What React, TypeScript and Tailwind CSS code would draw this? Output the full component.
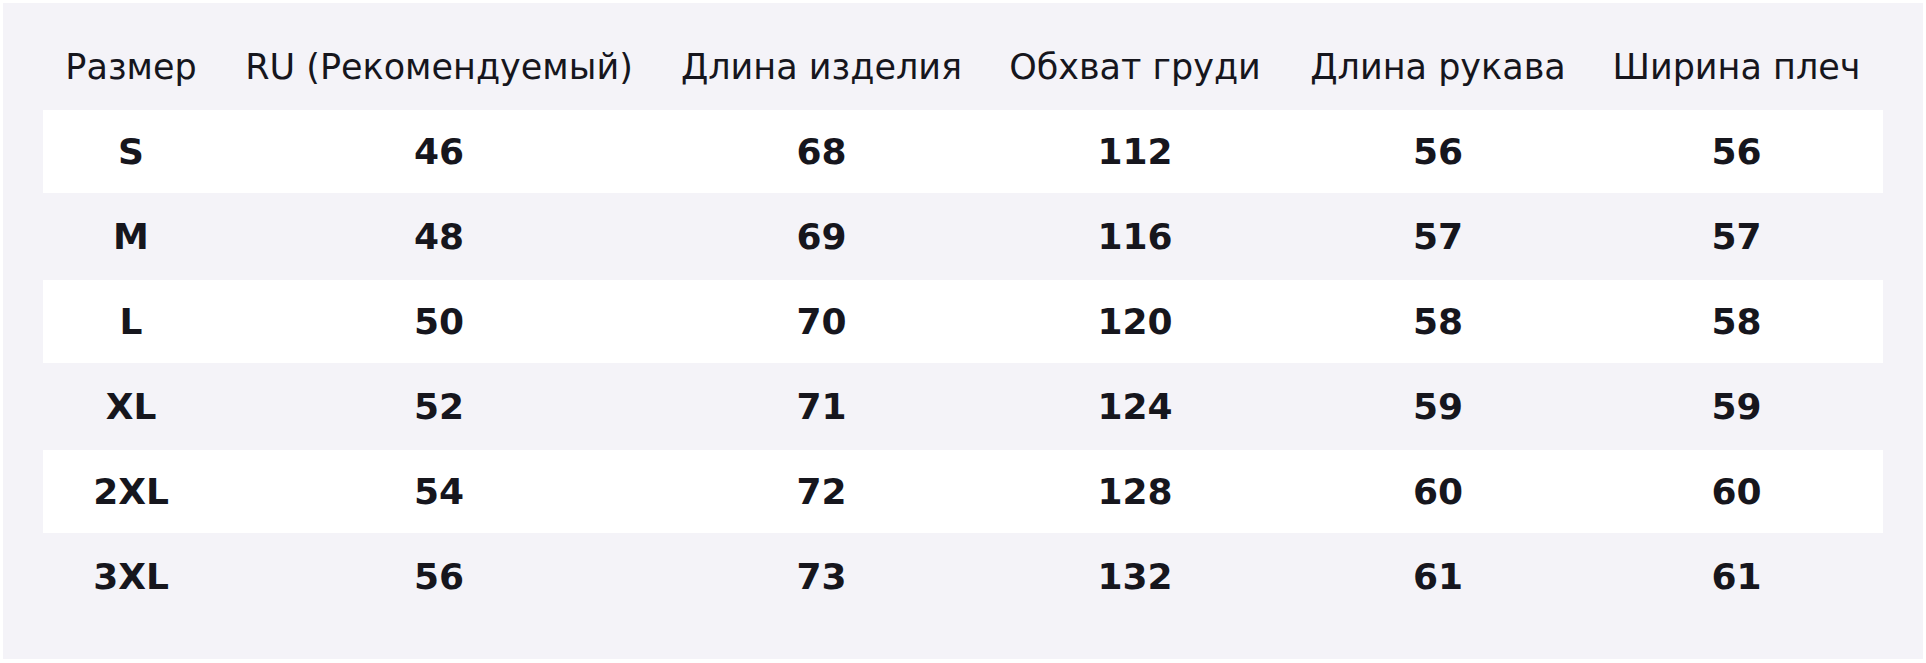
import React from "react";

// Size chart rows: size label, RU size, length, chest, sleeve, shoulders
const headers = [
  "Размер",
  "RU (Рекомендуемый)",
  "Длина изделия",
  "Обхват груди",
  "Длина рукава",
  "Ширина плеч",
];

const rows: string[][] = [
  ["S", "46", "68", "112", "56", "56"],
  ["M", "48", "69", "116", "57", "57"],
  ["L", "50", "70", "120", "58", "58"],
  ["XL", "52", "71", "124", "59", "59"],
  ["2XL", "54", "72", "128", "60", "60"],
  ["3XL", "56", "73", "132", "61", "61"],
];

const cols = "grid grid-cols-[176px_440px_325px_302px_304px_293px]";

export default function App() {
  return (
    <div className="w-[1926px] h-[663px] bg-white p-[3px] font-['DejaVu_Sans',sans-serif] text-[#16161d]">
      <div className="w-[1920px] h-[656px] bg-[#f4f3f8] px-[40px] pt-[40px]">
        {/* header */}
        <div className={`${cols} h-[66px] pt-[4px] text-[35px] leading-[41px]`}>
          {headers.map((h) => (
            <div key={h} className="text-center whitespace-nowrap">
              {h}
            </div>
          ))}
        </div>

        {/* body rows, every other one white */}
        {rows.map((row, i) => (
          <div key={row[0]} className="h-[85px] py-px">
            <div
              className={`${cols} h-full items-center text-[36px] leading-[42px] font-bold ${
                i % 2 === 0 ? "bg-white" : ""
              }`}
            >
              {row.map((cell, j) => (
                <div key={j} className="text-center">
                  {cell}
                </div>
              ))}
            </div>
          </div>
        ))}
      </div>
    </div>
  );
}
